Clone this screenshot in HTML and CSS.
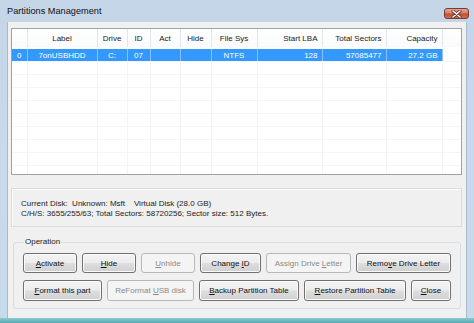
FILE: index.html
```html
<!DOCTYPE html>
<html>
<head>
<meta charset="utf-8">
<link rel="stylesheet" href="styles.css">
</head>
<body>
<div class="window">
  <div class="titlebar">
    <span class="title">Partitions Management</span>
    <span class="close-btn">
      <svg width="11" height="8" viewBox="0 0 11 8"><path d="M2 1 L9 7 M9 1 L2 7" stroke="#5a2a22" stroke-width="3" stroke-linecap="round"/><path d="M2 1 L9 7 M9 1 L2 7" stroke="#ffffff" stroke-width="1.6" stroke-linecap="round"/></svg>
    </span>
  </div>
  <div class="client">
    <div class="list">
      <table class="grid">
        <colgroup>
          <col class="c0"><col class="c1"><col class="c2"><col class="c3"><col class="c4"><col class="c5"><col class="c6"><col class="c7"><col class="c8"><col class="c9"><col>
        </colgroup>
        <thead>
          <tr>
            <th></th><th>Label</th><th>Drive</th><th>ID</th><th>Act</th><th>Hide</th><th>File Sys</th><th class="r">Start LBA</th><th class="r">Total Sectors</th><th class="r">Capacity</th><th></th>
          </tr>
        </thead>
        <tbody>
          <tr class="sel">
            <td class="l">0</td><td>7onUSBHDD</td><td>C:</td><td>07</td><td></td><td></td><td>NTFS</td><td class="r">128</td><td class="r">57085477</td><td class="r">27.2 GB</td><td class="blank"></td>
          </tr>
          <tr><td></td><td></td><td></td><td></td><td></td><td></td><td></td><td></td><td></td><td></td><td></td></tr>
          <tr><td></td><td></td><td></td><td></td><td></td><td></td><td></td><td></td><td></td><td></td><td></td></tr>
          <tr><td></td><td></td><td></td><td></td><td></td><td></td><td></td><td></td><td></td><td></td><td></td></tr>
          <tr><td></td><td></td><td></td><td></td><td></td><td></td><td></td><td></td><td></td><td></td><td></td></tr>
          <tr><td></td><td></td><td></td><td></td><td></td><td></td><td></td><td></td><td></td><td></td><td></td></tr>
          <tr><td></td><td></td><td></td><td></td><td></td><td></td><td></td><td></td><td></td><td></td><td></td></tr>
          <tr><td></td><td></td><td></td><td></td><td></td><td></td><td></td><td></td><td></td><td></td><td></td></tr>
          <tr><td></td><td></td><td></td><td></td><td></td><td></td><td></td><td></td><td></td><td></td><td></td></tr>
          <tr><td></td><td></td><td></td><td></td><td></td><td></td><td></td><td></td><td></td><td></td><td></td></tr>
        </tbody>
      </table>
    </div>
    <div class="info">
      <div>Current Disk:&nbsp; Unknown: Msft&nbsp;&nbsp;&nbsp; Virtual Disk (28.0 GB)</div>
      <div>C/H/S: 3655/255/63; Total Sectors: 58720256; Sector size: 512 Bytes.</div>
    </div>
    <fieldset class="group">
      <legend>Operation</legend>
      <div class="row">
        <span class="btn w54"><span><u>A</u>ctivate</span></span>
        <span class="btn w54"><span><u>H</u>ide</span></span>
        <span class="btn w54 dis"><span><u>U</u>nhide</span></span>
        <span class="btn w61"><span>Change <u>I</u>D</span></span>
        <span class="btn w85 dis"><span>Assign Drive <u>L</u>etter</span></span>
        <span class="btn w95"><span>Remo<u>v</u>e Drive Letter</span></span>
      </div>
      <div class="row">
        <span class="btn w79"><span><u>F</u>ormat this part</span></span>
        <span class="btn w87 dis"><span>ReFormat <u>U</u>SB disk</span></span>
        <span class="btn w100"><span><u>B</u>ackup Partition Table</span></span>
        <span class="btn w102"><span><u>R</u>estore Partition Table</span></span>
        <span class="btn w40"><span><u>C</u>lose</span></span>
      </div>
    </fieldset>
  </div>
  <div class="bottom-edge"></div>
</div>
</body>
</html>
```
FILE: styles.css
```css
html, body {
  margin: 0;
  padding: 0;
}
body {
  width: 474px;
  height: 323px;
  overflow: hidden;
  font-family: "Liberation Sans", Arial, sans-serif;
  font-size: 8px;
  color: #1a1a1a;
}
.window {
  width: 474px;
  height: 323px;
  display: flex;
  flex-direction: column;
  background: linear-gradient(to bottom, #c4d5e8 0%, #c8d9eb 40%, #c6dbe9 100%);
}
.titlebar {
  height: 22px;
  flex: none;
  display: flex;
  align-items: flex-start;
  padding: 0 5px 0 7px;
  box-sizing: border-box;
}
.title {
  font-size: 9.2px;
  line-height: 22px;
  color: #111;
}
.close-btn {
  margin-left: auto;
  margin-top: 8px;
  width: 25px;
  height: 11px;
  box-sizing: border-box;
  border: 1px solid #7a3a30;
  border-radius: 3px;
  background: linear-gradient(to bottom, #e8a593 0%, #d47f6a 45%, #c24a30 55%, #d2705a 100%);
  display: flex;
  align-items: center;
  justify-content: center;
}
.close-btn svg {
  display: block;
}
.client {
  flex: 1;
  margin: 0 7px;
  background: #f0f0f0;
  display: flex;
  flex-direction: column;
  padding: 6px 4px 0 4px;
  box-sizing: border-box;
  border-left: 1px solid #a9b9cb;
  border-right: 1px solid #a9b9cb;
}
.list {
  height: 147px;
  flex: none;
  border: 1px solid #9ba3ab;
  background: #fff;
  overflow: hidden;
  box-sizing: border-box;
  margin-left: -1px;
}
.grid {
  border-collapse: collapse;
  table-layout: fixed;
  width: 450px;
}
.c0 { width: 15px; }
.c1 { width: 70px; }
.c2 { width: 30px; }
.c3 { width: 23px; }
.c4 { width: 30px; }
.c5 { width: 31px; }
.c6 { width: 46px; }
.c7 { width: 65px; }
.c8 { width: 64px; }
.c9 { width: 56px; }
.grid th {
  height: 18px;
  padding: 0 4px;
  font-weight: normal;
  color: #222;
  text-align: center;
  border-right: 1px solid #e3e6ea;
  border-bottom: 1px solid #e3e6ea;
  background: linear-gradient(to bottom, #ffffff, #f9fafb);
  white-space: nowrap;
  overflow: hidden;
}
.grid td {
  height: 12px;
  padding: 0 4px;
  text-align: center;
  border-right: 1px solid #f3f3f3;
  border-bottom: 1px solid #f5f5f5;
  white-space: nowrap;
  overflow: hidden;
}
.grid .r { text-align: right; }
.grid .l { text-align: left; padding-left: 5px; }
.grid tbody tr:first-child td { border-top: 2px solid #fff; }
.grid tr.sel td {
  background: #3399ff;
  color: #fff;
  border-right-color: #8cc2fb;
}
.grid tr.sel td.blank {
  background: #fff;
}
.info {
  margin-top: 13px;
  height: 39px;
  flex: none;
  border: 1px solid #dcdcdc;
  box-shadow: inset 1px 1px 0 #fdfdfd;
  box-sizing: border-box;
  margin-left: -1px;
  padding-left: 9px;
  padding-top: 2px;
  display: flex;
  flex-direction: column;
  justify-content: center;
  line-height: 10px;
  color: #222;
}
.group {
  margin: 10px 2px 0 1px;
  padding: 6px 9px 7px 9px;
  border: 1px solid #d5dde3;
  border-radius: 3px;
  display: flex;
  flex-direction: column;
  gap: 7px;
}
.group legend {
  padding: 0 1px;
  margin-left: 1px;
  color: #222;
  line-height: 10px;
}
.row {
  display: flex;
  gap: 5px;
}
.btn {
  height: 20px;
  box-sizing: border-box;
  border: 1px solid #707070;
  border-radius: 3px;
  background: linear-gradient(to bottom, #f4f4f4 0%, #ececec 48%, #dedede 52%, #d0d0d0 100%);
  box-shadow: inset 0 0 0 1px #fbfbfb;
  display: flex;
  align-items: center;
  justify-content: center;
  color: #111;
  white-space: nowrap;
}
.row + .row .btn { height: 21px; }
.btn.dis {
  border-color: #b5b9bc;
  background: #f4f4f4;
  box-shadow: none;
  color: #8a8a8a;
}
.w40 { width: 40px; }
.w54 { width: 54px; }
.w61 { width: 61px; }
.w79 { width: 79px; }
.w85 { width: 85px; }
.w87 { width: 87px; }
.w95 { width: 95px; }
.w100 { width: 100px; }
.w102 { width: 102px; }
.bottom-edge {
  height: 5px;
  flex: none;
  background: linear-gradient(to bottom, #8fc8cf, #56aab2);
}
```
